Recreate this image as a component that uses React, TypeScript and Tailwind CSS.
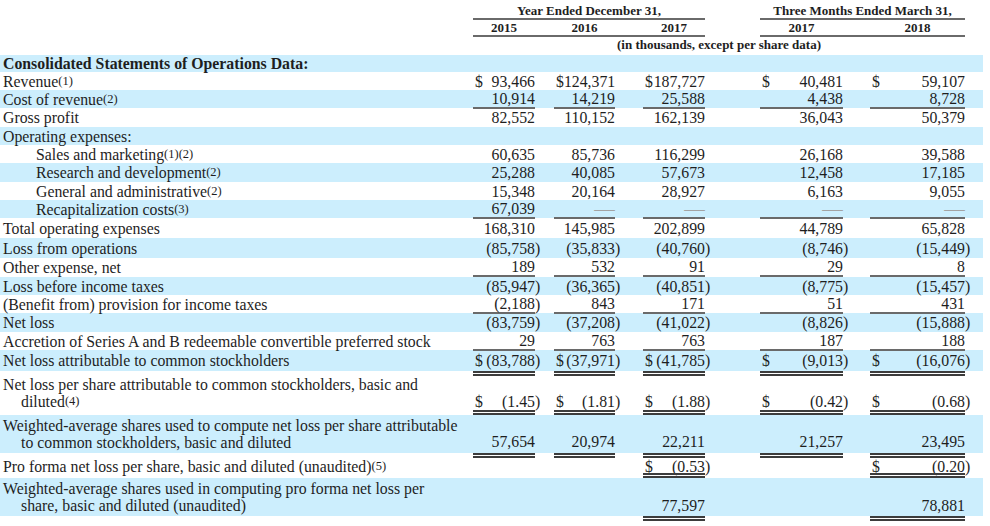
import React from 'react';

type U = '' | 's' | 'd';
type Cell = { v: string; u: U; d: boolean };
type RowSpec = {
  label: React.ReactNode;
  h: number;
  blue: boolean;
  bold?: boolean;
  indent?: boolean;
  cells?: Cell[];
  va?: string;
  labelCls?: string;
};

const c = (v: string, u: U = '', d = false): Cell => ({ v, u, d });

const COLS =
  'grid grid-cols-[473px_62px_19px_61px_28px_62px_55px_83px_27px_95px_18px] w-[983px]';

const H: Record<number, string> = {
  15: 'h-[15px]',
  17: 'h-[17px]',
  18: 'h-[18px]',
  19: 'h-[19px]',
  20: 'h-[20px]',
  21: 'h-[21px]',
  26: 'h-[26px]',
  34: 'h-[34px]',
  37: 'h-[37px]',
  38: 'h-[38px]',
  45: 'h-[45px]',
};

function Fn({ children }: { children: React.ReactNode }) {
  return <span className="text-[12.5px] align-[2px]">{children}</span>;
}

const rows: RowSpec[] = [
  { label: 'Consolidated Statements of Operations Data:', h: 17, blue: true, bold: true },
  {
    label: (
      <>
        Revenue<Fn>(1)</Fn>
      </>
    ),
    h: 18,
    blue: false,
    cells: [c('93,466', '', true), c('124,371', '', true), c('187,727', '', true), c('40,481', '', true), c('59,107', '', true)],
  },
  {
    label: (
      <>
        Cost of revenue<Fn>(2)</Fn>
      </>
    ),
    h: 18,
    blue: true,
    cells: [c('10,914', 's'), c('14,219', 's'), c('25,588', 's'), c('4,438', 's'), c('8,728', 's')],
  },
  {
    label: 'Gross profit',
    h: 19,
    blue: false,
    cells: [c('82,552'), c('110,152'), c('162,139'), c('36,043'), c('50,379')],
  },
  { label: 'Operating expenses:', h: 18, blue: true },
  {
    label: (
      <>
        Sales and marketing<Fn>(1)(2)</Fn>
      </>
    ),
    h: 18,
    blue: false,
    indent: true,
    cells: [c('60,635'), c('85,736'), c('116,299'), c('26,168'), c('39,588')],
  },
  {
    label: (
      <>
        Research and development<Fn>(2)</Fn>
      </>
    ),
    h: 19,
    blue: true,
    indent: true,
    cells: [c('25,288'), c('40,085'), c('57,673'), c('12,458'), c('17,185')],
  },
  {
    label: (
      <>
        General and administrative<Fn>(2)</Fn>
      </>
    ),
    h: 18,
    blue: false,
    indent: true,
    cells: [c('15,348'), c('20,164'), c('28,927'), c('6,163'), c('9,055')],
  },
  {
    label: (
      <>
        Recapitalization costs<Fn>(3)</Fn>
      </>
    ),
    h: 18,
    blue: true,
    indent: true,
    cells: [c('67,039', 's'), c('—', 's'), c('—', 's'), c('—', 's'), c('—', 's')],
  },
  {
    label: 'Total operating expenses',
    h: 20,
    blue: false,
    cells: [c('168,310'), c('145,985'), c('202,899'), c('44,789'), c('65,828')],
  },
  {
    label: 'Loss from operations',
    h: 20,
    blue: true,
    cells: [c('(85,758'), c('(35,833'), c('(40,760'), c('(8,746'), c('(15,449')],
  },
  {
    label: 'Other expense, net',
    h: 19,
    blue: false,
    cells: [c('189', 's'), c('532', 's'), c('91', 's'), c('29', 's'), c('8', 's')],
  },
  {
    label: 'Loss before income taxes',
    h: 18,
    blue: true,
    cells: [c('(85,947'), c('(36,365'), c('(40,851'), c('(8,775'), c('(15,457')],
  },
  {
    label: '(Benefit from) provision for income taxes',
    h: 18,
    blue: false,
    cells: [c('(2,188', 's'), c('843', 's'), c('171', 's'), c('51', 's'), c('431', 's')],
  },
  {
    label: 'Net loss',
    h: 19,
    blue: true,
    cells: [c('(83,759'), c('(37,208'), c('(41,022'), c('(8,826'), c('(15,888')],
  },
  {
    label: 'Accretion of Series A and B redeemable convertible preferred stock',
    h: 18,
    blue: false,
    cells: [c('29', 's'), c('763', 's'), c('763', 's'), c('187', 's'), c('188', 's')],
  },
  {
    label: 'Net loss attributable to common stockholders',
    h: 21,
    blue: true,
    cells: [
      c('(83,788', 'd', true),
      c('(37,971', 'd', true),
      c('(41,785', 'd', true),
      c('(9,013', 'd', true),
      c('(16,076', 'd', true),
    ],
  },
  {
    label: (
      <>
        <span className="block">Net loss per share attributable to common stockholders, basic and</span>
        <span className="block pl-[18px]">
          diluted<Fn>(4)</Fn>
        </span>
      </>
    ),
    h: 34,
    blue: false,
    labelCls: 'pt-[0px]',
    va: 'items-end',
    cells: [
      c('(1.45', 'd', true),
      c('(1.81', 'd', true),
      c('(1.88', 'd', true),
      c('(0.42', 'd', true),
      c('(0.68', 'd', true),
    ],
  },
  {
    label: (
      <>
        <span className="block">Weighted-average shares used to compute net loss per share attributable</span>
        <span className="block pl-[18px]">to common stockholders, basic and diluted</span>
      </>
    ),
    h: 38,
    blue: true,
    labelCls: 'pt-[2px]',
    va: 'items-end pb-[3px]',
    cells: [c('57,654', 'd'), c('20,974', 'd'), c('22,211', 'd'), c('21,257', 'd'), c('23,495', 'd')],
  },
  {
    label: (
      <>
        Pro forma net loss per share, basic and diluted (unaudited)<Fn>(5)</Fn>
      </>
    ),
    h: 15,
    blue: false,
    cells: [c(''), c(''), c('(0.53', 'd', true), c(''), c('(0.20', 'd', true)],
  },
  {
    label: (
      <>
        <span className="block">Weighted-average shares used in computing pro forma net loss per</span>
        <span className="block pl-[18px]">share, basic and diluted (unaudited)</span>
      </>
    ),
    h: 38,
    blue: true,
    labelCls: 'pt-[2px]',
    va: 'items-end pb-[2px]',
    cells: [c(''), c(''), c('77,597', 'd'), c(''), c('78,881', 'd')],
  },
];

function Row({ r }: { r: RowSpec }) {
  const va = r.va ?? 'items-center';
  const cells = r.cells ?? [c(''), c(''), c(''), c(''), c('')];
  const hasDbl = cells.some((x) => x.u === 'd');
  return (
    <>
      <div className={`${COLS} ${H[r.h]} ${r.blue ? 'bg-[#cceefd]' : 'bg-white'}`}>
        <div
          className={`whitespace-nowrap ${r.indent ? 'pl-[36px]' : 'pl-[3px]'} ${r.bold ? 'font-bold' : ''} ${
            r.labelCls ?? 'flex items-center'
          }`}
        >
          {r.labelCls ? <div>{r.label}</div> : <span>{r.label}</span>}
        </div>
        {cells.map((cell, i) => {
          const dash = cell.v === '—';
          const paren = cell.v.startsWith('(');
          return (
            <React.Fragment key={i}>
              <div
                className={`flex justify-between whitespace-nowrap ${va} ${
                  cell.u === 's' ? 'border-b-2 border-[#6a6a6a]' : ''
                }`}
              >
                <span className="pl-[2px]">{cell.d ? '$' : ''}</span>
                {dash ? (
                  <span className="inline-block origin-right scale-x-[1.3] text-[#a3a3a3]">—</span>
                ) : (
                  <span>{cell.v}</span>
                )}
              </div>
              <div className={`flex ${va}`}>{paren ? <span>)</span> : null}</div>
            </React.Fragment>
          );
        })}
      </div>
      {hasDbl ? (
        <div className={`${COLS} h-[5px] bg-white`}>
          <div />
          {cells.map((cell, i) => (
            <React.Fragment key={i}>
              <div className={cell.u === 'd' ? 'border-y-2 border-[#3c3c3c]' : ''} />
              <div />
            </React.Fragment>
          ))}
        </div>
      ) : null}
    </>
  );
}

function Header() {
  return (
    <div className={`${COLS} h-[55px] grid-rows-[20px_17px_18px] font-bold text-[13px] leading-[15px]`}>
      <div className="row-start-1 col-start-2 col-span-5 flex items-end justify-center border-b-2 border-[#6a6a6a]">
        Year Ended December 31,
      </div>
      <div className="row-start-1 col-start-8 col-span-3 flex items-end justify-center border-b-2 border-[#6a6a6a]">
        Three Months Ended March 31,
      </div>
      <div className="row-start-2 col-start-2 text-center border-b-2 border-[#6a6a6a]">2015</div>
      <div className="row-start-2 col-start-3 border-b-2 border-[#6a6a6a]" />
      <div className="row-start-2 col-start-4 text-center border-b-2 border-[#6a6a6a]">2016</div>
      <div className="row-start-2 col-start-5 border-b-2 border-[#6a6a6a]" />
      <div className="row-start-2 col-start-6 text-center border-b-2 border-[#6a6a6a]">2017</div>
      <div className="row-start-2 col-start-8 text-center border-b-2 border-[#6a6a6a]">2017</div>
      <div className="row-start-2 col-start-9 border-b-2 border-[#6a6a6a]" />
      <div className="row-start-2 col-start-10 text-center border-b-2 border-[#6a6a6a]">2018</div>
      <div className="row-start-3 col-start-2 col-span-9 text-center">(in thousands, except per share data)</div>
    </div>
  );
}

export default function App() {
  return (
    <div className="w-[990px] h-[526px] bg-white overflow-hidden font-['Liberation_Serif','Times_New_Roman',serif] text-[15.8px] leading-[17px] text-[#1e1e1e]">
      <Header />
      {rows.map((r, i) => (
        <Row key={i} r={r} />
      ))}
    </div>
  );
}
